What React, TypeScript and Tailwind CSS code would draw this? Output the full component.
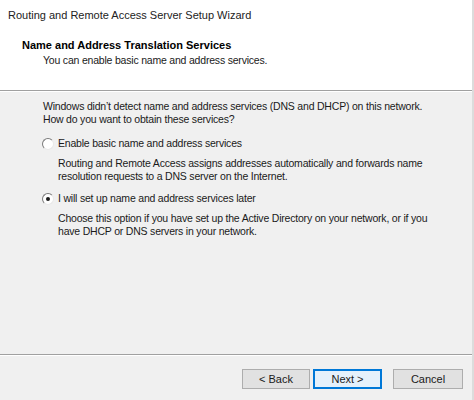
import React from 'react';

// Classic sunken radio: dark upper-left rim, light lower-right rim
const Radio: React.FC<{ checked?: boolean }> = ({ checked }) => (
  <span className="relative inline-block w-[12px] h-[12px] rounded-full border border-t-[#7a7a7a] border-l-[#7a7a7a] border-b-[#e8e8e8] border-r-[#e8e8e8] bg-white shrink-0">
    {checked && <span className="absolute left-[3px] top-[3px] w-[4px] h-[4px] rounded-full bg-[#1a1a1a]" />}
  </span>
);

const App: React.FC = () => {
  const options = [
    {
      label: 'Enable basic name and address services',
      desc: [
        'Routing and Remote Access assigns addresses automatically and forwards name',
        'resolution requests to a DNS server on the Internet.',
      ],
      checked: false,
    },
    {
      label: 'I will set up name and address services later',
      desc: [
        'Choose this option if you have set up the Active Directory on your network, or if you',
        'have DHCP or DNS servers in your network.',
      ],
      checked: true,
    },
  ];

  return (
    <div className="w-[474px] h-[400px] flex flex-col bg-[#f0f0f0] text-[#1a1a1a] border-r-2 border-[#dcdcdc] font-['Liberation_Sans',Arial,sans-serif] overflow-hidden">
      {/* Header */}
      <div className="h-[90px] bg-white shrink-0">
        <div className="pl-[8px] pt-[7px] text-[11px] leading-[16px] text-[#222]">
          Routing and Remote Access Server Setup Wizard
        </div>
        <div className="pl-[22px] pt-[15px] text-[11px] leading-[14px] font-bold text-black">
          Name and Address Translation Services
        </div>
        <div className="pl-[43px] pt-[1px] text-[10.5px] tracking-[-0.2px] leading-[14px]">
          You can enable basic name and address services.
        </div>
      </div>
      <div className="h-px bg-[#a0a0a0]" />
      <div className="h-px bg-white" />

      {/* Body */}
      <div className="flex-1 pl-[43px] pt-[8px] text-[10.5px] tracking-[-0.2px] leading-[13px]">
        <p>Windows didn&rsquo;t detect name and address services (DNS and DHCP) on this network.</p>
        <p>How do you want to obtain these services?</p>

        <div className="flex flex-col gap-[9px] mt-[11px]">
          {options.map((o) => (
            <div key={o.label}>
              <div className="flex items-center gap-[4px] -ml-[1px]">
                <Radio checked={o.checked} />
                <span>{o.label}</span>
              </div>
              <div className="pl-[15px] mt-[7px]">
                {o.desc.map((d) => (
                  <p key={d}>{d}</p>
                ))}
              </div>
            </div>
          ))}
        </div>
      </div>

      {/* Footer */}
      <div className="h-px bg-[#a0a0a0]" />
      <div className="h-px bg-white" />
      <div className="h-[44px] flex items-start justify-end gap-[3px] pt-[13px] pr-[9px] text-[11px]">
        <button className="w-[68px] h-[20px] border border-[#adadad] bg-[#e1e1e1]">&lt; Back</button>
        <button className="w-[69px] h-[20px] border border-[#0078d7] bg-[#e5f1fb] shadow-[inset_0_0_0_1px_#0078d7]">
          Next &gt;
        </button>
        <button className="w-[70px] h-[20px] ml-[8px] border border-[#adadad] bg-[#e1e1e1]">Cancel</button>
      </div>
    </div>
  );
};

export default App;
